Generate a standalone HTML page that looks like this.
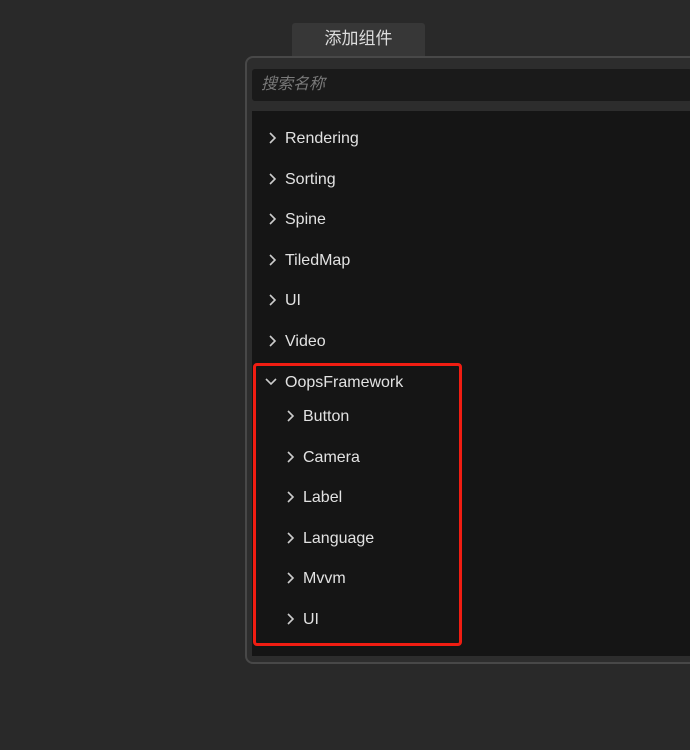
<!DOCTYPE html>
<html><head><style>
body{margin:0;width:690px;height:750px;background:#292929;overflow:hidden;position:relative;font-family:"Liberation Sans","Noto Sans CJK SC",sans-serif}
.tab{position:absolute;left:292px;top:23px;width:133px;height:34px;background:#373737;border-radius:3px 3px 0 0;color:#ddd;font-size:17px;text-align:center;line-height:32px}
.panel{position:absolute;left:245px;top:56px;width:460px;height:604px;border:2px solid #484848;border-radius:8px;background:#2d2d2d}
.search{position:absolute;left:252px;top:69px;width:440px;height:32px;background:#1a1a1a;border-radius:3px;color:#7a7a7a;font-style:italic;font-size:16px;line-height:32px;text-indent:9px}
.list{position:absolute;left:252px;top:111px;width:440px;height:545px;background:#151515}
.it{position:absolute;color:#e2e2e2;font-size:16px;line-height:20px;margin-top:1px}
.it svg{position:absolute;left:-17px;top:3px}
.red{position:absolute;left:253px;top:363px;width:203px;height:277px;border:3px solid #f01d12;border-radius:4px}
</style></head><body>
<div class="tab">添加组件</div>
<div class="panel"></div>
<div class="search">搜索名称</div>
<div class="list"></div>
<div class="it" style="left:285px;top:128px"><svg width="10" height="12"><path d="M2 1l5 5-5 5" stroke="#ccc" stroke-width="1.6" fill="none"/></svg>Rendering</div>
<div class="it" style="left:285px;top:169px"><svg width="10" height="12"><path d="M2 1l5 5-5 5" stroke="#ccc" stroke-width="1.6" fill="none"/></svg>Sorting</div>
<div class="it" style="left:285px;top:209px"><svg width="10" height="12"><path d="M2 1l5 5-5 5" stroke="#ccc" stroke-width="1.6" fill="none"/></svg>Spine</div>
<div class="it" style="left:285px;top:250px"><svg width="10" height="12"><path d="M2 1l5 5-5 5" stroke="#ccc" stroke-width="1.6" fill="none"/></svg>TiledMap</div>
<div class="it" style="left:285px;top:290px"><svg width="10" height="12"><path d="M2 1l5 5-5 5" stroke="#ccc" stroke-width="1.6" fill="none"/></svg>UI</div>
<div class="it" style="left:285px;top:331px"><svg width="10" height="12"><path d="M2 1l5 5-5 5" stroke="#ccc" stroke-width="1.6" fill="none"/></svg>Video</div>
<div class="it" style="left:285px;top:372px"><svg width="14" height="12" style="left:-20px;top:3px"><path d="M1 3l5 5 5-5" stroke="#ccc" stroke-width="1.6" fill="none"/></svg>OopsFramework</div>
<div class="it" style="left:303px;top:406px"><svg width="10" height="12"><path d="M2 1l5 5-5 5" stroke="#ccc" stroke-width="1.6" fill="none"/></svg>Button</div>
<div class="it" style="left:303px;top:447px"><svg width="10" height="12"><path d="M2 1l5 5-5 5" stroke="#ccc" stroke-width="1.6" fill="none"/></svg>Camera</div>
<div class="it" style="left:303px;top:487px"><svg width="10" height="12"><path d="M2 1l5 5-5 5" stroke="#ccc" stroke-width="1.6" fill="none"/></svg>Label</div>
<div class="it" style="left:303px;top:528px"><svg width="10" height="12"><path d="M2 1l5 5-5 5" stroke="#ccc" stroke-width="1.6" fill="none"/></svg>Language</div>
<div class="it" style="left:303px;top:568px"><svg width="10" height="12"><path d="M2 1l5 5-5 5" stroke="#ccc" stroke-width="1.6" fill="none"/></svg>Mvvm</div>
<div class="it" style="left:303px;top:609px"><svg width="10" height="12"><path d="M2 1l5 5-5 5" stroke="#ccc" stroke-width="1.6" fill="none"/></svg>UI</div>
<div class="red"></div>
</body></html>
